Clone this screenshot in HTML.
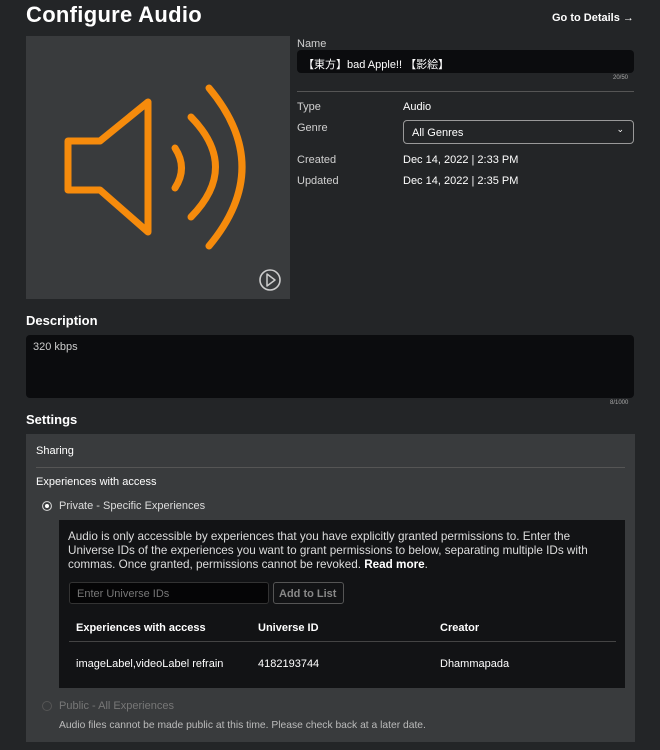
<!DOCTYPE html>
<html><head><meta charset="utf-8"><style>
*{margin:0;padding:0;box-sizing:border-box}
body{width:660px;height:750px;background:#232527;color:#fff;font-family:"Liberation Sans","Noto Sans CJK JP",sans-serif;position:relative;overflow:hidden}
.a{position:absolute;white-space:nowrap}
.lbl{font-size:11px;color:#d0d0d0}
.val{font-size:11px;color:#fff}
</style></head><body>
<div class="a" style="left:26px;top:2px;font-size:22px;font-weight:bold;letter-spacing:0.3px">Configure Audio</div>
<div class="a" style="left:552px;top:12px;font-size:11px;font-weight:bold">Go to Details →</div>
<div class="a" style="left:26px;top:36px;width:264px;height:263px;background:#393b3d">
<svg width="264" height="263" viewBox="26 36 264 263" style="position:absolute;left:0;top:0">
<g fill="none" stroke="#f68b0c" stroke-width="7" stroke-linecap="round" stroke-linejoin="round">
<path d="M68 141 L100 141 L148 102 L148 232 L100 190 L68 190 Z"/>
<path d="M175 148 Q188 168 175 188"/>
<path d="M191 117 Q240 167 191 217"/>
<path d="M209 88 Q275 167 209 246"/>
</g>
<circle cx="270" cy="280" r="10" fill="none" stroke="#ccc" stroke-width="1.6"/>
<path d="M267 274 L275 280 L267 286 Z" fill="none" stroke="#ccc" stroke-width="1.5" stroke-linejoin="round"/>
</svg></div>
<div class="a lbl" style="left:297px;top:38px">Name</div>
<div class="a" style="left:297px;top:50px;width:337px;height:23px;background:#0b0c0e;border-radius:4px;font-size:11px;padding:6px 0 0 6px">【東方】bad Apple!! 【影絵】</div>
<div class="a" style="left:613px;top:75px;font-size:6px;color:#aaa">20/50</div>
<div class="a" style="left:297px;top:91px;width:337px;height:1px;background:#555"></div>
<div class="a lbl" style="left:297px;top:101px">Type</div>
<div class="a val" style="left:403px;top:101px">Audio</div>
<div class="a lbl" style="left:297px;top:122px">Genre</div>
<div class="a" style="left:403px;top:120px;width:231px;height:24px;border:1px solid #999;border-radius:4px;font-size:11px;padding:6px 0 0 8px">All Genres<span style="position:absolute;right:9px;top:3px;font-size:9px">⌄</span></div>
<div class="a lbl" style="left:297px;top:154px">Created</div>
<div class="a val" style="left:403px;top:154px">Dec 14, 2022 | 2:33 PM</div>
<div class="a lbl" style="left:297px;top:175px">Updated</div>
<div class="a val" style="left:403px;top:175px">Dec 14, 2022 | 2:35 PM</div>
<div class="a" style="left:26px;top:313px;font-size:13px;font-weight:bold">Description</div>
<div class="a" style="left:26px;top:335px;width:608px;height:63px;background:#0b0c0e;border-radius:4px;font-size:11px;color:#ccc;padding:6px 0 0 7px">320 kbps</div>
<div class="a" style="left:610px;top:400px;font-size:6px;color:#aaa">8/1000</div>
<div class="a" style="left:26px;top:412px;font-size:13px;font-weight:bold">Settings</div>
<div class="a" style="left:26px;top:434px;width:609px;height:308px;background:#393b3d"></div>
<div class="a" style="left:36px;top:445px;font-size:11px">Sharing</div>
<div class="a" style="left:36px;top:467px;width:589px;height:1px;background:#555"></div>
<div class="a" style="left:36px;top:476px;font-size:11px">Experiences with access</div>
<div class="a" style="left:42px;top:501px;width:10px;height:10px;border-radius:50%;border:1px solid #ccc;background:#fff;box-shadow:inset 0 0 0 2px #393b3d"></div>
<div class="a" style="left:59px;top:500px;font-size:11px;color:#ddd">Private - Specific Experiences</div>
<div class="a" style="left:59px;top:520px;width:566px;height:168px;background:#121315"></div>
<div class="a" style="left:68px;top:530px;font-size:11.7px;color:#ddd;line-height:14px">Audio is only accessible by experiences that you have explicitly granted permissions to. Enter the<br>Universe IDs of the experiences you want to grant permissions to below, separating multiple IDs with<br>commas. Once granted, permissions cannot be revoked. <b style="color:#fff">Read more</b>.</div>
<div class="a" style="left:69px;top:582px;width:200px;height:22px;background:#050506;border:1px solid #333;border-radius:3px;font-size:11px;color:#777;padding:5px 0 0 7px">Enter Universe IDs</div>
<div class="a" style="left:273px;top:582px;width:71px;height:22px;border:1px solid #555;border-radius:3px;font-size:11px;color:#888;padding:5px 0 0 5px;font-weight:bold">Add to List</div>
<div class="a" style="left:76px;top:622px;font-size:11px;font-weight:bold">Experiences with access</div>
<div class="a" style="left:258px;top:622px;font-size:11px;font-weight:bold">Universe ID</div>
<div class="a" style="left:440px;top:622px;font-size:11px;font-weight:bold">Creator</div>
<div class="a" style="left:69px;top:641px;width:547px;height:1px;background:#444"></div>
<div class="a" style="left:76px;top:658px;font-size:11px">imageLabel,videoLabel refrain</div>
<div class="a" style="left:258px;top:658px;font-size:11px">4182193744</div>
<div class="a" style="left:440px;top:658px;font-size:11px">Dhammapada</div>
<div class="a" style="left:42px;top:701px;width:10px;height:10px;border-radius:50%;border:1px solid #555"></div>
<div class="a" style="left:59px;top:700px;font-size:11px;color:#777">Public - All Experiences</div>
<div class="a" style="left:59px;top:720px;font-size:10.3px;color:#bbb">Audio files cannot be made public at this time. Please check back at a later date.</div>
</body></html>
